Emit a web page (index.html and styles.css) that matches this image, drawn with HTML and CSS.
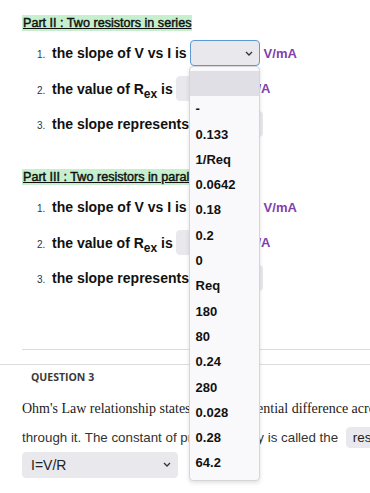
FILE: index.html
```html
<!DOCTYPE html>
<html lang="en">
<head>
    <meta charset="UTF-8">
    <meta name="viewport" content="width=device-width, initial-scale=1.0">
    <title>Lab Quiz - Resistors</title>
    <link rel="stylesheet" href="styles.css">
</head>
<body>
    <div class="question">
        <div class="part">
            <h3 class="part-title">Part II : Two resistors in series</h3>
            <ol class="steps">
                <li class="step">
                    <span class="q">the slope of V vs I is</span>
                    <div class="pick pick-open w-slope">
                        <span></span>
                        <svg class="chev" width="8" height="5" viewBox="0 0 8 5"><polyline points="1,1 4,4 7,1" /></svg>

                        <!-- open dropdown list of the first select -->
                        <ul class="menu">
                            <li class="menu-item active">&nbsp;</li>
                            <li class="menu-item">-</li>
                            <li class="menu-item">0.133</li>
                            <li class="menu-item">1/Req</li>
                            <li class="menu-item">0.0642</li>
                            <li class="menu-item">0.18</li>
                            <li class="menu-item">0.2</li>
                            <li class="menu-item">0</li>
                            <li class="menu-item">Req</li>
                            <li class="menu-item">180</li>
                            <li class="menu-item">80</li>
                            <li class="menu-item">0.24</li>
                            <li class="menu-item">280</li>
                            <li class="menu-item">0.028</li>
                            <li class="menu-item">0.28</li>
                            <li class="menu-item">64.2</li>
                        </ul>
                    </div>
                    <span class="unit">V/mA</span>
                </li>
                <li class="step">
                    <span class="q">the value of R<sub>ex</sub> is</span>
                    <div class="pick w-value">
                        <span></span>
                        <svg class="chev" width="8" height="5" viewBox="0 0 8 5"><polyline points="1,1 4,4 7,1" /></svg>
                    </div>
                    <span class="unit">V/A</span>
                </li>
                <li class="step">
                    <span class="q">the slope represents</span>
                    <div class="pick w-rep">
                        <span></span>
                        <svg class="chev" width="8" height="5" viewBox="0 0 8 5"><polyline points="1,1 4,4 7,1" /></svg>
                    </div>
                </li>
            </ol>
        </div>

        <div class="part part-next">
            <h3 class="part-title">Part III : Two resistors in parallel</h3>
            <ol class="steps">
                <li class="step">
                    <span class="q">the slope of V vs I is</span>
                    <div class="pick w-slope">
                        <span></span>
                        <svg class="chev" width="8" height="5" viewBox="0 0 8 5"><polyline points="1,1 4,4 7,1" /></svg>
                    </div>
                    <span class="unit">V/mA</span>
                </li>
                <li class="step">
                    <span class="q">the value of R<sub>ex</sub> is</span>
                    <div class="pick w-value">
                        <span></span>
                        <svg class="chev" width="8" height="5" viewBox="0 0 8 5"><polyline points="1,1 4,4 7,1" /></svg>
                    </div>
                    <span class="unit">V/A</span>
                </li>
                <li class="step">
                    <span class="q">the slope represents</span>
                    <div class="pick w-rep">
                        <span></span>
                        <svg class="chev" width="8" height="5" viewBox="0 0 8 5"><polyline points="1,1 4,4 7,1" /></svg>
                    </div>
                </li>
            </ol>
        </div>

        <hr class="part-end">
    </div>

    <div class="question question-next">
        <div class="q-label">QUESTION 3</div>
        <p class="stem">
            <span class="serif">Ohm's Law relationship states that the potential difference across a conductor is directly proportional to the current</span><br>
            through it. The constant of proportionality is called the <span class="pick pick-inline">resistance</span>
        </p>
        <div class="pick w-law">
            <span>I=V/R</span>
            <svg class="chev" width="8" height="5" viewBox="0 0 8 5"><polyline points="1,1 4,4 7,1" /></svg>
        </div>
    </div>
</body>
</html>
```

FILE: styles.css
```css
body {
    margin: 0;
    font-family: "Liberation Sans", Arial, sans-serif;
    color: #111111;
    background-color: #ffffff;
    overflow-x: hidden;
}

.question {
    padding: 15px 0 14px 22px;
}

.question-next {
    border-top: 1px solid #dddddd;
    padding-top: 5px;
}

.part-title {
    width: fit-content;
    margin: 0;
    padding: 0 1px;
    font-size: 12.6px;
    font-weight: normal;
    line-height: 16px;
    white-space: nowrap;
    background-color: #c6efce;
    text-decoration: underline;
    -webkit-text-stroke: 0.45px #111111;
}

.part-next {
    margin-top: 32px;
}

.steps {
    list-style: none;
    margin: 9px 0 0;
    padding: 0 0 0 15px;
    display: flex;
    flex-direction: column;
    gap: 9.5px;
    counter-reset: step;
}

.step {
    display: flex;
    align-items: center;
    gap: 3px;
    height: 26px;
    counter-increment: step;
    white-space: nowrap;
}

.q {
    font-size: 14px;
    font-weight: bold;
}

.q::before {
    content: counter(step) ".";
    display: inline-block;
    width: 15px;
    font-size: 10px;
    font-weight: normal;
    color: #333333;
}

.q sub {
    font-size: 12px;
    line-height: 0;
}

.unit {
    margin-left: 1px;
    font-size: 13px;
    font-weight: bold;
    color: #8040b0;
}

/* select boxes */
.pick {
    position: relative;
    display: flex;
    align-items: center;
    justify-content: space-between;
    box-sizing: border-box;
    height: 26px;
    padding: 0 6px 0 7px;
    background-color: #e9e9ed;
    border: 1px solid #e9e9ed;
    border-radius: 4px;
    font-size: 13.33px;
    color: #222222;
}

.pick-open {
    border-color: #5b9ad6;
}

.chev {
    fill: none;
    stroke: #333333;
    stroke-width: 1.3;
}

.w-slope { width: 70px; }
.w-value { width: 69px; height: 25px; }
.w-rep { width: 71px; }
.w-law { width: 156px; height: 26px; font-size: 14px; padding-left: 8px; }

.pick-inline {
    display: inline-flex;
    height: 21px;
    margin-left: 4px;
    padding: 0 6px;
    vertical-align: middle;
}

/* open listbox */
.menu {
    position: absolute;
    top: calc(100% + 1px);
    left: -2px;
    z-index: 10;
    width: 71px;
    box-sizing: border-box;
    margin: 0;
    padding: 4px 0 4px;
    list-style: none;
    background-color: #f9f9fb;
    border: 1px solid #d6d6da;
    border-radius: 4px;
    box-shadow: 0 2px 4px rgba(0, 0, 0, 0.12);
}

.menu-item {
    height: 25.3px;
    line-height: 25.3px;
    padding-left: 6px;
    font-size: 13px;
    font-weight: bold;
    color: #111111;
}

.menu-item.active {
    background-color: #dfdfe5;
}

.part-end {
    margin: 58px 0 0;
    border: 0;
    border-top: 1px solid #dddddd;
}

.q-label {
    padding-left: 9px;
    font-family: "Open Sans", "Liberation Sans", sans-serif;
    font-size: 10.5px;
    font-weight: bold;
    line-height: 14px;
    color: #3a3a3a;
}

.stem {
    margin: 9.5px 0 0;
    font-size: 13.33px;
    line-height: 29px;
    color: #333333;
    white-space: nowrap;
}

.serif {
    font-family: "Liberation Serif", "Times New Roman", serif;
    font-size: 14px;
    color: #1a1a1a;
}
```
